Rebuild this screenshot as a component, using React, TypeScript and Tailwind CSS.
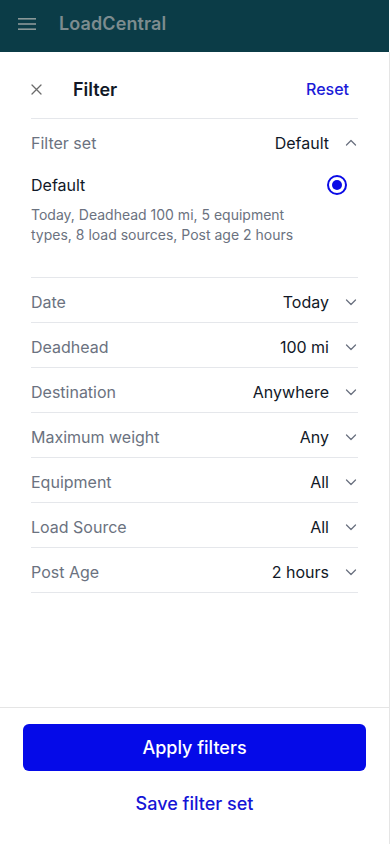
import React from "react";

const Chevron = ({ up = false }: { up?: boolean }) => (
  <svg width="12" height="12" viewBox="0 0 12 12" fill="none" className="shrink-0">
    <path
      d={up ? "M1.5 8 L6 3.5 L10.5 8" : "M1.5 4 L6 8.5 L10.5 4"}
      stroke="#6b7280"
      strokeWidth="1.3"
      strokeLinecap="round"
      strokeLinejoin="round"
    />
  </svg>
);

const rows = [
  ["Date", "Today"],
  ["Deadhead", "100 mi"],
  ["Destination", "Anywhere"],
  ["Maximum weight", "Any"],
  ["Equipment", "All"],
  ["Load Source", "All"],
  ["Post Age", "2 hours"],
];

export default function App() {
  return (
    <div
      className="w-[390px] h-[844px] flex flex-col bg-white overflow-hidden"
      style={{ fontFamily: "Inter, 'Noto Sans', sans-serif" }}
    >
      <header className="h-[52px] w-[389px] bg-[#0b3c47] flex items-center pb-[5px] shrink-0">
        <svg width="18" height="12" viewBox="0 0 18 12" className="ml-[18px]">
          <rect x="0" y="0" width="18" height="1.6" fill="#8a9898" />
          <rect x="0" y="5.2" width="18" height="1.6" fill="#8a9898" />
          <rect x="0" y="10.4" width="18" height="1.6" fill="#8a9898" />
        </svg>
        <span className="ml-[23px] text-[18px] font-semibold text-[#7d8c8f] tracking-[0.1px]">
          LoadCentral
        </span>
      </header>
      <div className="flex-1 flex flex-col w-[390px] border-r border-[#e5e5e5] min-h-0">
        <main className="flex-1 px-[31px] w-[389px]">
          <div className="h-[67px] pt-[8px] flex items-center border-b border-[#e5e7eb]">
            <svg width="11" height="11" viewBox="0 0 11 11" className="shrink-0">
              <path d="M1 1 L10 10 M10 1 L1 10" stroke="#6b6b6b" strokeWidth="1.3" strokeLinecap="round" />
            </svg>
            <span className="ml-[31px] text-[18px] font-semibold text-[#111827]">Filter</span>
            <span className="ml-auto mr-[9px] text-[16px] font-medium text-[#1b1bd8]">Reset</span>
          </div>
          <div className="border-b border-[#e5e7eb] pb-[32px]">
            <div className="h-[48px] flex items-center">
              <span className="text-[16px] text-[#6b7280]">Filter set</span>
              <span className="ml-auto text-[16px] text-[#111827]">Default</span>
              <span className="ml-[16px] mr-[1px]">
                <Chevron up />
              </span>
            </div>
            <div className="flex items-center mt-[6px] h-[24px]">
              <span className="text-[16px] text-[#111827]">Default</span>
              <span className="ml-auto mr-[11px] w-[20px] h-[20px] rounded-full border-2 border-[#0a0ae6] flex items-center justify-center">
                <span className="w-[10px] h-[10px] rounded-full bg-[#0a0ae6]" />
              </span>
            </div>
            <p className="mt-[8px] text-[14px] leading-[20px] text-[#6b7280] w-[275px]">
              Today, Deadhead 100 mi, 5 equipment types, 8 load sources, Post age 2 hours
            </p>
          </div>
          {rows.map(([label, value]) => (
            <div key={label} className="h-[45px] pt-[4px] flex items-center border-b border-[#e5e7eb]">
              <span className="text-[16px] text-[#6b7280]">{label}</span>
              <span className="ml-auto text-[16px] text-[#111827]">{value}</span>
              <span className="ml-[16px] mr-[1px]">
                <Chevron />
              </span>
            </div>
          ))}
        </main>
        <footer className="shrink-0 border-t border-[#e5e5e5] w-[389px] px-[23px] pt-4 pb-[30px] flex flex-col">
          <button className="h-[47px] w-full rounded-[6px] bg-[#050ae8] text-white text-[18px] font-medium">
            Apply filters
          </button>
          <button className="mt-[19px] h-[24px] text-[18px] font-medium text-[#1515d6]">
            Save filter set
          </button>
        </footer>
      </div>
    </div>
  );
}
